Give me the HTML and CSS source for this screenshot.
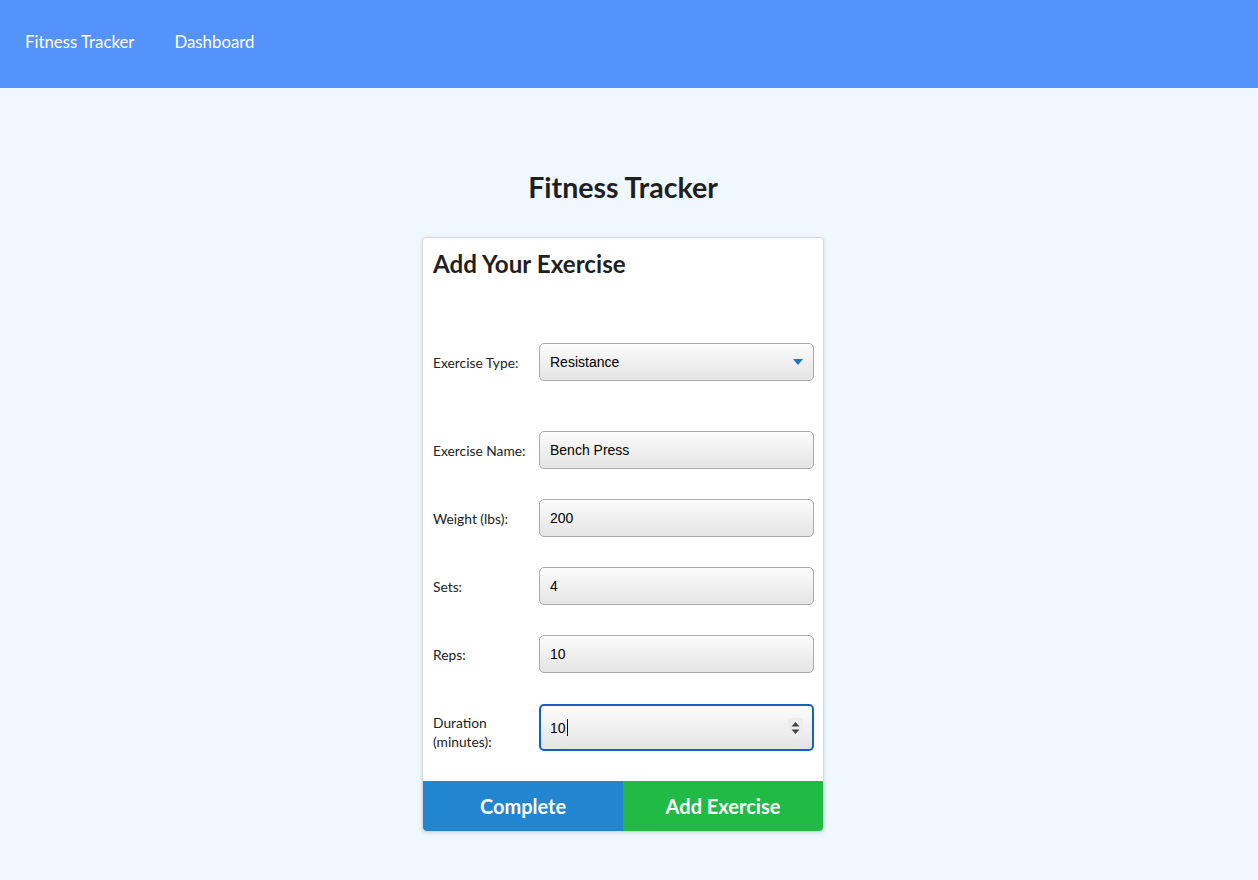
FILE: index.html
```html
<!DOCTYPE html>
<html>
<head>
<meta charset="utf-8">
<link rel="stylesheet" href="styles.css">
</head>
<body>
<nav class="navbar">
  <a class="nav-link" href="#">Fitness Tracker</a>
  <a class="nav-link" href="#">Dashboard</a>
</nav>
<main class="main">
  <h1 class="page-title">Fitness Tracker</h1>
  <div class="card">
    <div class="card-body">
      <h2 class="card-title">Add Your Exercise</h2>
      <form class="form">
        <div class="field field-type">
          <label class="label">Exercise Type:</label>
          <div class="control select">
            <span class="value">Resistance</span>
            <svg class="caret" width="10" height="6" viewBox="0 0 10 6"><path d="M0 0h10L5 6z" fill="#1479c9"/></svg>
          </div>
        </div>
        <div class="field">
          <label class="label">Exercise Name:</label>
          <div class="control"><span class="value">Bench Press</span></div>
        </div>
        <div class="field">
          <label class="label">Weight (lbs):</label>
          <div class="control"><span class="value">200</span></div>
        </div>
        <div class="field">
          <label class="label">Sets:</label>
          <div class="control"><span class="value">4</span></div>
        </div>
        <div class="field">
          <label class="label">Reps:</label>
          <div class="control"><span class="value">10</span></div>
        </div>
        <div class="field field-duration">
          <label class="label label-duration">Duration<br>(minutes):</label>
          <div class="control focused">
            <span class="value">10<span class="cursor"></span></span>
            <span class="spinner">
              <svg width="9" height="12" viewBox="0 0 9 12"><path d="M4.5 0L8.5 4.5H0.5z M4.5 12L8.5 7.5H0.5z" fill="#444"/></svg>
            </span>
          </div>
        </div>
      </form>
    </div>
    <div class="actions">
      <button class="btn btn-blue" type="button">Complete</button>
      <button class="btn btn-green" type="button">Add Exercise</button>
    </div>
  </div>
</main>
</body>
</html>
```
FILE: styles.css
```css
* { box-sizing: border-box; }
html, body { margin: 0; padding: 0; }
body {
  background: #eff7ff;
  font-family: Lato, "Noto Sans", sans-serif;
  color: #212121;
  height: 880px;
}
.navbar {
  background: #5593fc;
  height: 88px;
  display: flex;
  align-items: center;
  padding: 0 5px;
}
.nav-link {
  color: #fff;
  text-decoration: none;
  font-family: Lato, "Noto Sans", sans-serif;
  font-size: 16.8px;
  padding: 0 20px;
  margin-top: -6px;
}
.main {
  display: flex;
  flex-direction: column;
  align-items: center;
  padding-right: 12px;
}
.page-title {
  font-size: 28.5px;
  font-weight: 700;
  margin: 82px 0 0;
  line-height: 34px;
  color: #1f1f1f;
}
.card {
  margin-top: 33px;
  width: 402px;
  background: #fff;
  border: 1px solid #d8d8dc;
  border-radius: 4px;
  box-shadow: 0 1px 4px rgba(0,0,0,0.12);
}
.card-body {
  padding: 11px 9px 30px 10px;
}
.card-title {
  margin: 0;
  font-size: 24.2px;
  line-height: 30px;
  font-weight: 700;
  color: #1f1f1f;
}
.form {
  display: flex;
  flex-direction: column;
  gap: 30px;
  margin-top: 64.4px;
}
.field {
  display: flex;
  align-items: center;
}
.field-type { margin-bottom: 20px; }
.field-duration { margin-top: 1px; }
.label {
  width: 106px;
  flex: none;
  font-size: 13.8px;
  line-height: 19px;
  color: #222;
}
.label-duration { margin-top: 9px; }
.control {
  flex: 1;
  height: 38px;
  border: 1px solid #a9a9a9;
  border-radius: 5px;
  background: linear-gradient(#fcfcfc, #e4e4e4);
  display: flex;
  align-items: center;
  padding: 0 10px;
  font-family: "Liberation Sans", Arial, sans-serif;
  font-size: 14px;
  color: #000;
}
.control .value { flex: 1; display: flex; align-items: center; }
.focused {
  height: 47px;
  border: 2px solid #1560c8;
  padding: 0 9px;
}
.cursor {
  display: inline-block;
  width: 1px;
  height: 17px;
  background: #000;
  margin-left: 1px;
}
.spinner {
  width: 15px;
  height: 20px;
  display: flex;
  align-items: center;
  justify-content: center;
  background: #ececec;
}
.actions {
  display: flex;
  height: 50px;
}
.btn {
  flex: 1;
  border: 0;
  margin: 0;
  color: #fff;
  font-family: Lato, sans-serif;
  font-weight: 700;
  font-size: 20px;
  cursor: pointer;
}
.btn-blue { background: #2185d0; border-bottom-left-radius: 4px; }
.btn-green { background: #21ba45; border-bottom-right-radius: 4px; }
```
